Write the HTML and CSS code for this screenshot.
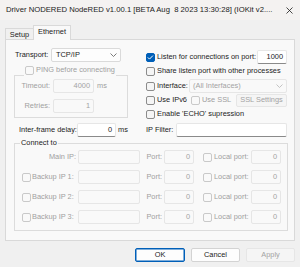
FILE: index.html
```html
<!DOCTYPE html>
<html>
<head>
<meta charset="utf-8">
<link rel="stylesheet" href="styles.css">
</head>
<body>
<div class="window">
  <div class="titlebar">
    <span class="title">Driver NODERED NodeRED v1.00.1 [BETA Aug  8 2023 13:30:28] (IOKit v2....</span>
    <svg class="close" viewBox="0 0 7 7" width="7" height="7"><path d="M0.5 0.5L6.5 6.5M6.5 0.5L0.5 6.5" stroke="#1b1b1b" stroke-width="0.8" fill="none"/></svg>
  </div>
  <div class="tabs">
    <div class="tab">Setup</div>
    <div class="tab active">Ethernet</div>
  </div>
  <div class="page">
    <div class="top">
      <div class="left">
        <div class="row transport">
          <span class="lbl-transport">Transport:</span>
          <div class="select">
            <span>TCP/IP</span>
            <svg class="chev" viewBox="0 0 7 4" width="7" height="4"><path d="M0.5 0.5L3.5 3.5L6.5 0.5" fill="none" stroke="#5a5a5a" stroke-width="0.8"/></svg>
          </div>
        </div>
        <div class="grp-head ping">
          <span class="line-l"></span>
          <span class="legend"><span class="cb dis"></span><span class="cb-text dis-t">PING before connecting</span></span>
          <span class="line-r"></span>
        </div>
        <div class="grp-body ping-body">
          <div class="row">
            <span class="lbl-r dis-t">Timeout:</span>
            <span class="field dis w41">4000</span>
            <span class="unit dis-t">ms</span>
          </div>
          <div class="row gap6">
            <span class="lbl-r dis-t">Retries:</span>
            <span class="field dis w41">1</span>
          </div>
        </div>
      </div>
      <div class="right">
        <div class="row">
          <span class="cb on"><svg viewBox="0 0 9 9" width="9" height="9"><path d="M1.8 4.4L3.5 6.1L6.9 2.6" fill="none" stroke="#fff" stroke-width="1"/></svg></span>
          <span class="cb-text">Listen for connections on port:</span>
          <span class="field edit w30 push">1000</span>
        </div>
        <div class="row">
          <span class="cb"></span>
          <span class="cb-text">Share listen port with other processes</span>
        </div>
        <div class="row mt1">
          <span class="cb"></span>
          <span class="cb-text">Interface:</span>
          <div class="select dis iface push">
            <span>(All Interfaces)</span>
            <svg class="chev" viewBox="0 0 7 4" width="7" height="4"><path d="M0.5 0.5L3.5 3.5L6.5 0.5" fill="none" stroke="#b5b5b5" stroke-width="0.8"/></svg>
          </div>
        </div>
        <div class="row">
          <span class="opt ipv6"><span class="cb"></span><span class="cb-text">Use IPv6</span></span>
          <span class="opt"><span class="cb dis"></span><span class="cb-text dis-t">Use SSL</span></span>
          <span class="btn dis ssl push">SSL Settings</span>
        </div>
        <div class="row">
          <span class="cb"></span>
          <span class="cb-text">Enable 'ECHO' supression</span>
        </div>
      </div>
    </div>
    <div class="mid">
      <div class="mid-left">
        <span class="lbl-delay">Inter-frame delay:</span>
        <span class="field edit w39">0</span>
        <span class="unit">ms</span>
      </div>
      <div class="mid-right">
        <span>IP Filter:</span>
        <span class="field edit filter"></span>
      </div>
    </div>
    <div class="grp-head connect">
      <span class="line-l"></span>
      <span class="legend">Connect to</span>
      <span class="line-r"></span>
    </div>
    <div class="grp-body connect-body">
      <div class="crow">
        <span class="ccell end"><span class="dis-t">Main IP:</span></span>
        <span class="field dis w62"></span>
        <span class="pcell dis-t">Port:</span>
        <span class="field dis w30">0</span>
        <span class="lcell"><span class="cb dis"></span><span class="cb-text dis-t">Local port:</span></span>
        <span class="field dis w30">0</span>
      </div>
      <div class="crow">
        <span class="ccell"><span class="cb dis"></span><span class="cb-text1 dis-t">Backup IP 1:</span></span>
        <span class="field dis w62"></span>
        <span class="pcell dis-t">Port:</span>
        <span class="field dis w30">0</span>
        <span class="lcell"><span class="cb dis"></span><span class="cb-text dis-t">Local port:</span></span>
        <span class="field dis w30">0</span>
      </div>
      <div class="crow">
        <span class="ccell"><span class="cb dis"></span><span class="cb-text1 dis-t">Backup IP 2:</span></span>
        <span class="field dis w62"></span>
        <span class="pcell dis-t">Port:</span>
        <span class="field dis w30">0</span>
        <span class="lcell"><span class="cb dis"></span><span class="cb-text dis-t">Local port:</span></span>
        <span class="field dis w30">0</span>
      </div>
      <div class="crow">
        <span class="ccell"><span class="cb dis"></span><span class="cb-text1 dis-t">Backup IP 3:</span></span>
        <span class="field dis w62"></span>
        <span class="pcell dis-t">Port:</span>
        <span class="field dis w30">0</span>
        <span class="lcell"><span class="cb dis"></span><span class="cb-text dis-t">Local port:</span></span>
        <span class="field dis w30">0</span>
      </div>
    </div>
  </div>
  <div class="buttons">
    <span class="btn default w50">OK</span>
    <span class="btn w49">Cancel</span>
    <span class="btn dis w49">Apply</span>
  </div>
</div>
</body>
</html>
```

FILE: styles.css
```css
* { box-sizing: border-box; }
html, body { margin: 0; padding: 0; }
body {
  width: 300px;
  height: 267px;
  overflow: hidden;
  background: #f0f0f0;
  font-family: "Liberation Sans", Arial, sans-serif;
  font-size: 7.4px;
  color: #1b1b1b;
  line-height: 1;
}
.window { width: 300px; height: 267px; display: flex; flex-direction: column; }

.titlebar {
  height: 20px;
  flex: none;
  display: flex;
  align-items: center;
  justify-content: space-between;
  padding: 0 7px 0 6px;
  background: #f4f2f1;
}
.title { font-size: 7.7px; white-space: pre; }
.close { display: block; }

.tabs { height: 19px; flex: none; display: flex; align-items: flex-end; padding-left: 5px; }
.tab {
  width: 29px;
  height: 11px;
  border: 1px solid #d9d9d9;
  border-bottom: none;
  display: flex;
  align-items: center;
  justify-content: center;
  padding-top: 1px;
}
.tab.active {
  width: 38px;
  height: 15px;
  margin-left: -1px;
  margin-bottom: -1px;
  background: #f9f9f9;
  position: relative;
  z-index: 1;
  padding-top: 0;
  padding-bottom: 2px;
}

.page {
  flex: none;
  margin-left: 5px;
  width: 290px;
  height: 202px;
  border: 1px solid #d9d9d9;
  background: #f9f9f9;
  padding: 0 5px 0 8px;
  display: flex;
  flex-direction: column;
}

.top { display: flex; height: 81px; flex: none; }
.left { width: 114px; margin-top: 8px; display: flex; flex-direction: column; }
.right { width: 141px; margin-left: 18px; margin-top: 10px; display: flex; flex-direction: column; }

.row { height: 14px; display: flex; align-items: center; flex: none; }
.mt1 { margin-top: 1px; }
.gap6 { margin-top: 6px; }
.push { margin-left: auto; }

.lbl-transport { width: 37px; padding-left: 1px; }

.select {
  width: 70px;
  height: 14px;
  background: #fdfdfd;
  border: 1px solid #dadada;
  border-radius: 2px;
  display: flex;
  align-items: center;
  justify-content: space-between;
  padding: 0 3px 0 4px;
}
.select.dis { background: #f9f9f9; border-color: #e6e6e6; color: #a3a3a3; }
.select.iface { width: 98px; padding-left: 3px; }
.chev { display: block; }

.grp-head { display: flex; flex: none; }
.grp-head .line-l, .grp-head .line-r { border-top: 1px solid #dcdcdc; }
.grp-head .line-l { border-left: 1px solid #dcdcdc; }
.grp-head .line-r { flex: 1; border-right: 1px solid #dcdcdc; }
.grp-head .legend { display: flex; align-items: center; padding: 0 1px; }

.ping { height: 12px; margin-top: 2px; }
.ping .line-l, .ping .line-r { margin-top: 11px; }
.ping .line-l { width: 10px; }

.grp-body {
  border: 1px solid #dcdcdc;
  border-top: none;
  display: flex;
  flex-direction: column;
  flex: none;
}
.ping-body { padding: 3px 0 4px 0; }

.lbl-r { width: 38px; text-align: right; padding-right: 3px; }
.unit { margin-left: 3px; }

.field {
  height: 14px;
  border: 1px solid #e6e6e6;
  border-radius: 2px;
  display: flex;
  align-items: center;
  justify-content: flex-end;
  padding-right: 3px;
  flex: none;
}
.field.dis { background: #f9f9f9; color: #a3a3a3; }
.field.edit { background: #ffffff; border-bottom-color: #8a8a8a; }
.w30 { width: 30px; }
.w39 { width: 39px; }
.w41 { width: 41px; }
.w62 { width: 62px; }

.cb {
  width: 9px;
  height: 9px;
  flex: none;
  border: 1px solid #8c8c8c;
  border-radius: 2px;
  background: #f5f5f5;
  display: block;
}
.cb.dis { border-color: #c9c9c9; background: #f9f9f9; }
.cb.on { background: #005fb8; border-color: #005fb8; position: relative; }
.cb.on svg { display: block; margin: -1px; }
.cb-text { margin-left: 2px; white-space: nowrap; }
.cb-text1 { margin-left: 1px; white-space: nowrap; }
.dis-t { color: #a0a0a0; }

.opt { display: flex; align-items: center; }
.ipv6 { width: 45px; }
.btn {
  height: 14px;
  display: flex;
  align-items: center;
  justify-content: center;
  background: #fdfdfd;
  border: 1px solid #d3d3d3;
  border-radius: 2px;
  flex: none;
}
.btn.dis { background: #f5f5f5; border-color: #e6e6e6; color: #a3a3a3; }
.btn.ssl { width: 51px; height: 13px; }

.mid { display: flex; height: 14px; margin-top: 2px; margin-right: 2px; flex: none; }
.mid-left { width: 132px; display: flex; align-items: center; padding-left: 5px; }
.lbl-delay { width: 58px; white-space: nowrap; }
.mid-left .unit { margin-left: 2px; }
.mid-right { flex: 1; display: flex; align-items: center; }
.filter { flex: 1; margin-left: 3px; }

.connect { height: 11px; margin-right: 1px; }
.connect .line-l, .connect .line-r { margin-top: 6px; }
.connect .line-l { width: 6px; }
.connect-body { margin-right: 1px; padding: 2px 0 6px 7px; gap: 6px; }

.crow { height: 14px; display: flex; align-items: center; }
.ccell { width: 54px; margin-right: 2px; display: flex; align-items: center; }
.ccell.end { justify-content: flex-end; }
.pcell { width: 24px; text-align: right; padding-right: 2px; }
.lcell { width: 48px; margin-left: 9px; display: flex; align-items: center; }

.buttons {
  flex: none;
  display: flex;
  justify-content: flex-end;
  gap: 6px;
  padding-right: 5px;
  margin-top: 7px;
}
.btn.default { border-color: #005fb8; box-shadow: inset 0 0 0 0.5px #005fb8; background: #fdfdfd; }
.w50 { width: 50px; }
.w49 { width: 49px; }
```
